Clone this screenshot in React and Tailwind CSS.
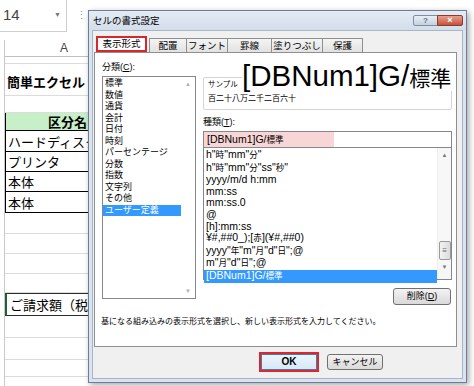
import React from "react";

const CJK = /([\u3000-\u30ff\u4e00-\u9fff\uff00-\uffef]+)/;

// CJK runs are drawn a little smaller than Latin, like Meiryo UI
const Mix = ({ text }) =>
  text.split(CJK).map((part, i) =>
    i % 2 ? (
      <span key={i} className="text-[0.82em]">
        {part}
      </span>
    ) : (
      part
    )
  );

const categories = [
  "標準",
  "数値",
  "通貨",
  "会計",
  "日付",
  "時刻",
  "パーセンテージ",
  "分数",
  "指数",
  "文字列",
  "その他",
  "ユーザー定義",
];

const formats = [
  'h"時"mm"分"',
  'h"時"mm"分"ss"秒"',
  "yyyy/m/d h:mm",
  "mm:ss",
  "mm:ss.0",
  "@",
  "[h]:mm:ss",
  "¥#,##0_);[赤](¥#,##0)",
  'yyyy"年"m"月"d"日";@',
  'm"月"d"日";@',
  "[DBNum1]G/標準",
];

const sheetRows = [
  { h: "h-[7px]" },
  { h: "h-[32px]", text: "簡単エクセル", type: "title" },
  { h: "h-[17px]" },
  { h: "h-[18px]", text: "区分名", type: "green" },
  { h: "h-[21px]", text: "ハードディスク", type: "box" },
  { h: "h-[20px]", text: "プリンタ", type: "box" },
  { h: "h-[20px]", text: "本体", type: "box" },
  { h: "h-[21px]", text: "本体", type: "box" },
  { h: "h-[21px]" },
  { h: "h-[20px]" },
  { h: "h-[20px]" },
  { h: "h-[19px]" },
  { h: "h-[23px]", text: "ご請求額（税抜）", type: "total" },
  { h: "h-[22px]" },
  { h: "h-[22px]" },
  { h: "h-[17px]" },
  { h: "h-[12px]" },
];

const rowClass = (type) => {
  if (type === "title")
    return "border-b border-[#dcdcdc] pt-[4px] pl-[2px] font-bold";
  if (type === "green")
    return "border-b border-l border-black bg-[#c8f0c8] pl-[42px] font-bold";
  if (type === "box") return "border-b border-l border-black pl-[2px]";
  if (type === "total")
    return "border-y border-[#2c2c2c] border-l-2 border-l-[#1f5f3a] pl-[3px]";
  return "border-b border-[#dcdcdc]";
};

const Tab = ({ label, w }) => (
  <div
    className={`-ml-px flex h-[14px] items-center justify-center border border-b-0 border-[#8e8f8f] bg-gradient-to-b from-[#f4f4f4] to-[#e2e2e2] text-[9.5px] leading-none ${w}`}
  >
    {label}
  </div>
);

const App = () => {
  return (
    <div className="relative h-[386px] w-[474px] overflow-hidden bg-white font-['Liberation_Sans','Noto_Sans_CJK_JP',sans-serif] text-black">
      {/* spreadsheet behind the dialog */}
      <div className="flex h-[40px] items-start">
        <div className="flex h-[32px] w-[67px] items-center justify-between border-b border-r border-[#cfcfcf] pl-[3px] pr-[5px] text-[15px] text-[#444]">
          <span>14</span>
          <span className="text-[7px] text-[#777]">▼</span>
        </div>
        <div className="ml-[9px] mt-[10px] text-[11px] leading-none text-[#999]">⋮</div>
      </div>
      <div className="flex">
        <div className="w-[5px] border-r border-[#c8c8c8]" />
        <div className="flex w-[120px] flex-col font-['Noto_Sans_CJK_JP',sans-serif] text-[13px]">
          <div className="flex h-[17px] items-center justify-center border-b border-[#c0c0c0] pr-[2px] font-['Liberation_Sans',sans-serif] text-[12px] text-[#444]">
            A
          </div>
          {sheetRows.map((row, i) => (
            <div
              key={i}
              className={`flex items-center whitespace-nowrap leading-none ${row.h} ${rowClass(row.type)}`}
            >
              {row.text}
            </div>
          ))}
        </div>
      </div>

      {/* format cells dialog */}
      <div className="absolute left-[88px] top-[10px] flex h-[373px] w-[379px] flex-col border border-[#6a7f99] bg-[#dbe4ee] shadow-[2px_2px_6px_rgba(0,0,0,0.35)]">
        <div className="flex h-[19px] items-center justify-between bg-gradient-to-b from-[#e4ebf4] to-[#d3deeb] pl-[4px] pr-[3px]">
          <span className="font-['Noto_Sans_CJK_JP',sans-serif] text-[9.5px] leading-none">
            セルの書式設定
          </span>
          <div className="flex">
            <div className="flex h-[11px] w-[25px] items-center justify-center rounded-l-[2px] border border-[#7d8ea3] bg-gradient-to-b from-[#e9eef5] to-[#c5d1df] text-[8px] font-bold leading-none text-[#5e6e82]">
              ?
            </div>
            <div className="-ml-px flex h-[11px] w-[26px] items-center justify-center rounded-r-[2px] border border-[#8a3b31] bg-gradient-to-b from-[#e7a08e] to-[#c5503b] text-[9px] font-bold leading-none text-white">
              ×
            </div>
          </div>
        </div>

        <div className="mx-[3px] mb-[3px] flex flex-1 flex-col border border-[#a6b6c8] bg-[#f0f0f0] px-[1px] font-['Liberation_Sans','Noto_Sans_CJK_JP',sans-serif]">
          {/* tabs */}
          <div className="mt-[5px] flex h-[16px] items-end pl-[2px]">
            <div className="relative z-10 flex h-[16px] w-[51px] items-center justify-center border-2 border-[#d8262c] bg-white text-[9.5px] leading-none">
              表示形式
            </div>
            <div className="ml-[3px] flex">
              <Tab label="配置" w="w-[38px]" />
              <Tab label="フォント" w="w-[42px]" />
              <Tab label="罫線" w="w-[45px]" />
              <Tab label="塗りつぶし" w="w-[52px]" />
              <Tab label="保護" w="w-[41px]" />
            </div>
          </div>

          {/* panel */}
          <div className="flex h-[295px] w-[363px] flex-col border border-[#8e8f8f] bg-white">
            <div className="flex">
              <div className="w-[101px] pl-[7px] pt-[9px]">
                <div className="text-[9px] leading-[10px]">
                  分類(<span className="underline">C</span>):
                </div>
                <div className="mt-[4px] flex h-[223px] w-[94px] border border-[#828790]">
                  <div className="flex-1 pt-[1px] text-[9px] leading-[11.5px]">
                    {categories.map((c) => (
                      <div
                        key={c}
                        className={
                          c === "ユーザー定義"
                            ? "bg-[#3399ff] pl-[2px] text-white"
                            : "pl-[2px]"
                        }
                      >
                        {c}
                      </div>
                    ))}
                  </div>
                  <div className="flex w-[14px] flex-col items-center justify-between py-[4px] text-[6px] leading-none text-[#b0b0b0]">
                    <span>▲</span>
                    <span>▼</span>
                  </div>
                </div>
              </div>

              <div className="ml-[7px] w-[249px]">
                <div className="relative mt-[24px] h-[33px] rounded-[2px] border border-[#d5d5d5]">
                  <div className="pl-[4px] pt-[2px] text-[7.5px] leading-[9px]">サンプル</div>
                  <div className="mt-[5px] pl-[4px] text-[8px] leading-[9px]">
                    百二十八万二千二百六十
                  </div>
                  <div className="absolute left-[38px] top-[-17px] flex items-baseline whitespace-nowrap bg-white pr-[1px] text-[29.5px] leading-none">
                    <span>[DBNum1]G/</span>
                    <span className="text-[21px]">標準</span>
                  </div>
                </div>

                <div className="mt-[7px] text-[9px] leading-[10px]">
                  種類(<span className="underline">T</span>):
                </div>
                <div className="relative mt-[4px] flex h-[17px] items-center border border-[#828790] pl-[3px] text-[10.5px] leading-none">
                  <div className="absolute inset-y-0 left-0 w-[130px] bg-[#f9d6d6]" />
                  <span className="relative">
                    <Mix text="[DBNum1]G/標準" />
                  </span>
                </div>
                <div className="flex h-[132px] border border-t-0 border-[#828790]">
                  <div className="flex-1 pt-[1px] text-[10.5px] leading-[11.6px]">
                    {formats.map((f, i) => (
                      <div
                        key={f}
                        className={
                          i === formats.length - 1
                            ? "whitespace-nowrap bg-[#3399ff] pl-[2px] text-white"
                            : "whitespace-nowrap pl-[2px]"
                        }
                      >
                        <Mix text={f} />
                      </div>
                    ))}
                  </div>
                  <div className="flex w-[14px] flex-col items-center border-l border-[#eeeeee] bg-[#f7f7f7] pt-[4px] text-[6px] leading-none text-[#777]">
                    <span>▲</span>
                    <div className="mt-[83px] flex h-[19px] w-[12px] items-center justify-center rounded-[2px] border border-[#9a9a9a] bg-gradient-to-r from-[#f3f3f3] to-[#dcdcdc] text-[8px] text-[#666]">
                      ≡
                    </div>
                    <span className="mt-[4px]">▼</span>
                  </div>
                </div>
                <div className="mt-[8px] flex justify-end pr-[1px]">
                  <div className="flex h-[17px] w-[58px] items-center justify-center rounded-[3px] border border-[#707070] bg-gradient-to-b from-[#f3f3f3] to-[#d9d9d9] text-[9px] leading-none">
                    削除(<span className="underline">D</span>)
                  </div>
                </div>
              </div>
            </div>
            <div className="mt-[12px] whitespace-nowrap pl-[6px] text-[8px] leading-[10px]">
              基になる組み込みの表示形式を選択し、新しい表示形式を入力してください。
            </div>
          </div>

          {/* dialog buttons */}
          <div className="mt-[5px] flex items-center justify-end pr-[78px]">
            <div className="h-[20px] w-[60px] border-2 border-[#e0262c]">
              <div className="flex h-full items-center justify-center border border-[#3c7fb1] bg-gradient-to-b from-[#eaf6fd] to-[#d9e8f3] text-[10px] font-bold leading-none">
                OK
              </div>
            </div>
            <div className="ml-[8px] flex h-[16px] w-[56px] items-center justify-center rounded-[3px] border border-[#707070] bg-gradient-to-b from-[#f3f3f3] to-[#dadada] text-[9px] leading-none">
              キャンセル
            </div>
          </div>
        </div>
      </div>
    </div>
  );
};

export default App;
